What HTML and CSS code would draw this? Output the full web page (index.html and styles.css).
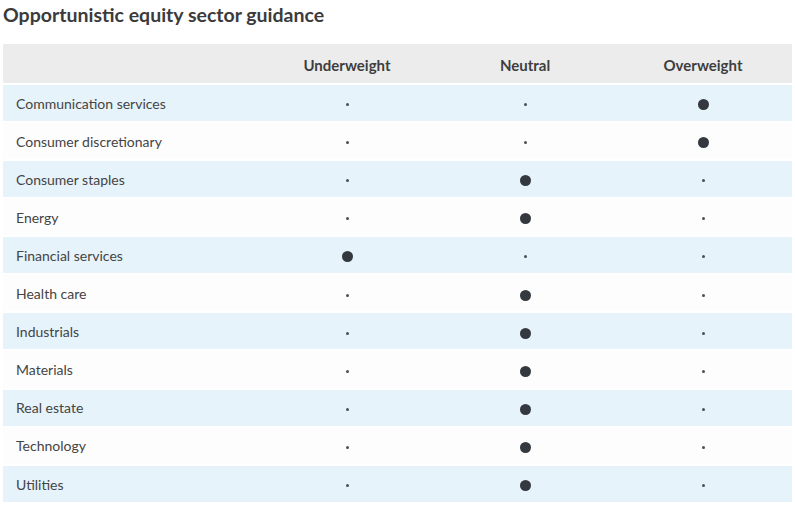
FILE: index.html
```html
<!DOCTYPE html>
<html>
<head>
<meta charset="utf-8">
<link rel="stylesheet" href="styles.css">
</head>
<body>
<h1 class="title">Opportunistic equity sector guidance</h1>
<table class="guide">
  <thead>
    <tr><th class="sector"></th><th>Underweight</th><th>Neutral</th><th>Overweight</th></tr>
  </thead>
  <tbody>
    <tr class="alt"><td class="sector">Communication services</td><td><span class="dot"></span></td><td><span class="dot"></span></td><td><span class="big"></span></td></tr>
    <tr><td class="sector">Consumer discretionary</td><td><span class="dot"></span></td><td><span class="dot"></span></td><td><span class="big"></span></td></tr>
    <tr class="alt"><td class="sector">Consumer staples</td><td><span class="dot"></span></td><td><span class="big"></span></td><td><span class="dot"></span></td></tr>
    <tr><td class="sector">Energy</td><td><span class="dot"></span></td><td><span class="big"></span></td><td><span class="dot"></span></td></tr>
    <tr class="alt"><td class="sector">Financial services</td><td><span class="big"></span></td><td><span class="dot"></span></td><td><span class="dot"></span></td></tr>
    <tr><td class="sector">Health care</td><td><span class="dot"></span></td><td><span class="big"></span></td><td><span class="dot"></span></td></tr>
    <tr class="alt"><td class="sector">Industrials</td><td><span class="dot"></span></td><td><span class="big"></span></td><td><span class="dot"></span></td></tr>
    <tr><td class="sector">Materials</td><td><span class="dot"></span></td><td><span class="big"></span></td><td><span class="dot"></span></td></tr>
    <tr class="alt"><td class="sector">Real estate</td><td><span class="dot"></span></td><td><span class="big"></span></td><td><span class="dot"></span></td></tr>
    <tr><td class="sector">Technology</td><td><span class="dot"></span></td><td><span class="big"></span></td><td><span class="dot"></span></td></tr>
    <tr class="alt"><td class="sector">Utilities</td><td><span class="dot"></span></td><td><span class="big"></span></td><td><span class="dot"></span></td></tr>
  </tbody>
</table>
</body>
</html>
```
FILE: styles.css
```css
html, body {
  margin: 0;
  padding: 0;
  background: #ffffff;
}
body {
  font-family: Lato, "Liberation Sans", sans-serif;
  color: #444444;
  padding: 0 3px;
}
.title {
  margin: 0;
  padding-top: 2px;
  font-size: 19.5px;
  font-weight: 700;
  line-height: 25px;
  color: #3b3b3b;
}
.guide {
  margin-top: 15px;
  width: 789px;
  border-collapse: separate;
  border-spacing: 0 2px;
  table-layout: fixed;
}
.guide th {
  background: #ececec;
  height: 39px;
  padding: 0;
  font-size: 15px;
  font-weight: 700;
  color: #3e3e3e;
  text-align: center;
  width: 178px;
  vertical-align: middle;
  padding-top: 2px;
  box-sizing: border-box;
}
.guide th.sector {
  width: 255px;
}
.guide td {
  height: 36px;
  padding: 0;
  text-align: center;
  vertical-align: middle;
  font-size: 14px;
  background: #fdfdfd;
}
.guide tbody tr:nth-child(n+6) td {
  height: 36.2px;
}
.guide tr.alt td {
  background: #e6f3fb;
}
.guide td.sector {
  text-align: left;
  padding-left: 13px;
  color: #444444;
}
.dot {
  display: inline-block;
  width: 3px;
  height: 3px;
  border-radius: 50%;
  background: #4a4f55;
  vertical-align: middle;
}
.big {
  display: inline-block;
  width: 11px;
  height: 11px;
  border-radius: 50%;
  background: #34393f;
  vertical-align: middle;
}
```
